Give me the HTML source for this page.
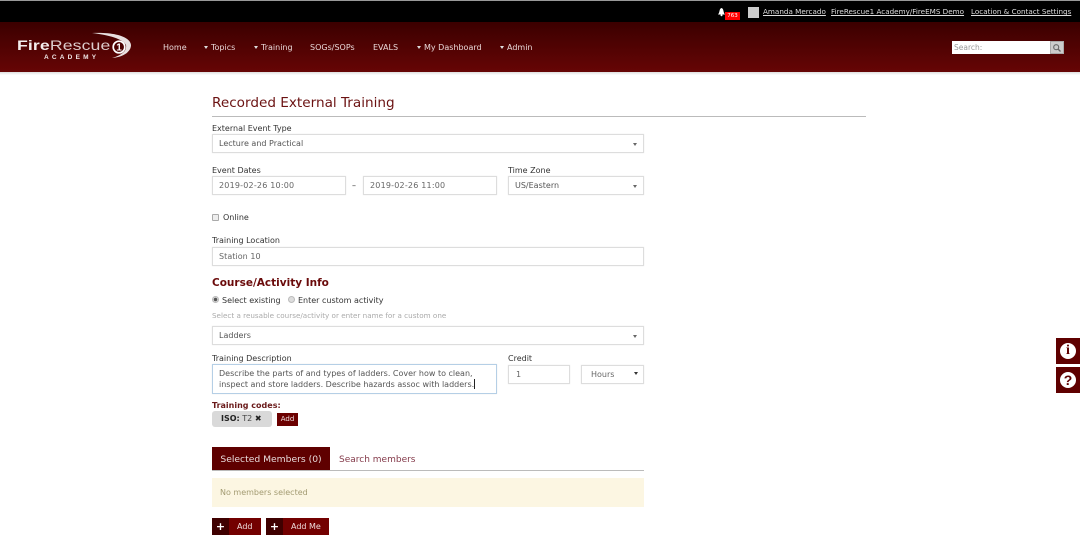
<!DOCTYPE html>
<html><head><meta charset="utf-8"><style>
html,body{margin:0;padding:0;background:#fff;width:1080px;height:541px;overflow:hidden}
body{position:relative;font-family:"DejaVu Sans",sans-serif;font-size:8px;color:#333}
.a{position:absolute;white-space:nowrap;line-height:12px}
.box{position:absolute;box-sizing:border-box;border:1px solid #ddd;background:#fff;color:#666;font-size:8px;padding-left:6px;white-space:nowrap;box-shadow:0 0 1px #e4e4e4}
.car{position:absolute;width:0;height:0;border:2.5px solid transparent;border-top:3px solid #666;border-bottom:0}
.nav{position:absolute;top:42px;color:#e8d8d8;font-size:8px;line-height:12px;white-space:nowrap}
.nc{display:inline-block;width:0;height:0;border:2.5px solid transparent;border-top:3px solid #ddd;border-bottom:0;margin-right:3px;vertical-align:1px}
.top{position:absolute;top:6px;color:#ddd;font-size:7.2px;line-height:12px;text-decoration:underline;white-space:nowrap}
</style></head><body>
<div style="position:absolute;left:0;top:0;width:1080px;height:1px;background:#999"></div>
<div style="position:absolute;left:0;top:1px;width:1080px;height:21px;background:#000"></div>
<div style="position:absolute;left:0;top:22px;width:1080px;height:50px;background:linear-gradient(#3b0000,#660505)"></div>
<div style="position:absolute;left:0;top:72px;width:1080px;height:3px;background:linear-gradient(#ddd,#fff)"></div>

<svg style="position:absolute;left:716px;top:6px" width="12" height="12" viewBox="0 0 12 12"><path d="M2 8.5 C4 6.5 3 2.5 5.5 2 C8 2.5 7 6.5 9 8.5 Z" fill="#fff"/><circle cx="5.5" cy="9.2" r="1" fill="#fff"/></svg>
<div class="a" style="left:725px;top:12px;width:15px;height:8px;background:#f00;color:#fff;font-size:5.5px;line-height:8px;text-align:center">763</div>
<div style="position:absolute;left:748px;top:7px;width:11px;height:11px;background:#ccc"></div>
<div class="top" style="left:763px">Amanda Mercado</div>
<div class="top" style="left:831px">FireRescue1 Academy/FireEMS Demo</div>
<div class="top" style="left:971px">Location &amp; Contact Settings</div>

<div class="a" style="left:17px;top:37px;font-family:'Liberation Sans',sans-serif;font-size:14px;line-height:16px;color:#f4eeee;transform-origin:0 50%;transform:scaleX(1.26);letter-spacing:.1px"><b>Fire</b><span style="font-weight:400;color:#dccccc">Rescue</span></div>
<svg style="position:absolute;left:85px;top:30px" width="50" height="32" viewBox="0 0 50 32"><path d="M7 3 C28 2 45 6 46 15 C46 22 38 27 27 28 C37 25 42 21 41 15 C38 9 24 5 7 3Z" fill="#e8e0e0"/><circle cx="34" cy="17" r="5.8" fill="#4a0000" stroke="#fff" stroke-width="1.7"/><text x="34" y="20.5" text-anchor="middle" font-family="Liberation Sans" font-weight="700" font-size="10" fill="#fff">1</text></svg>
<div class="a" style="left:44px;top:53px;font-family:'Liberation Sans',sans-serif;font-size:6.5px;line-height:9px;font-weight:700;color:#f0e6e6;letter-spacing:3.2px">ACADEMY</div>

<div class="nav" style="left:163px">Home</div>
<div class="nav" style="left:204px"><span class="nc"></span>Topics</div>
<div class="nav" style="left:254px"><span class="nc"></span>Training</div>
<div class="nav" style="left:310px">SOGs/SOPs</div>
<div class="nav" style="left:373px">EVALS</div>
<div class="nav" style="left:417px"><span class="nc"></span>My Dashboard</div>
<div class="nav" style="left:500px"><span class="nc"></span>Admin</div>

<div class="a" style="left:952px;top:41px;width:99px;height:13px;background:#fff;color:#999;font-size:7.5px;line-height:13px;padding-left:2px;box-sizing:border-box">Search:</div>
<div style="position:absolute;left:1050px;top:41px;width:14px;height:13px;background:#ccc;border:1px solid #aaa;box-sizing:border-box"></div>
<svg style="position:absolute;left:1052px;top:43px" width="10" height="10" viewBox="0 0 10 10"><circle cx="4.2" cy="4.2" r="2.5" fill="none" stroke="#666" stroke-width="1.1"/><path d="M6 6 L8.5 8.5" stroke="#666" stroke-width="1.3"/></svg>

<div class="a" style="left:212px;top:95px;font-size:13.6px;line-height:17px;color:#6b1212">Recorded External Training</div>
<div style="position:absolute;left:212px;top:116px;width:654px;height:1px;background:#bbb"></div>

<div class="a" style="left:212px;top:123px">External Event Type</div>
<div class="box" style="left:212px;top:134px;width:432px;height:19px;line-height:18px;color:#555">Lecture and Practical</div><div class="car" style="left:633px;top:143px"></div>

<div class="a" style="left:212px;top:165px">Event Dates</div>
<div class="box" style="left:212px;top:176px;width:134px;height:19px;line-height:18px;letter-spacing:.2px">2019-02-26 10:00</div>
<div class="a" style="left:352px;top:180px;color:#333">–</div>
<div class="box" style="left:363px;top:176px;width:134px;height:19px;line-height:18px;letter-spacing:.2px">2019-02-26 11:00</div>
<div class="a" style="left:508px;top:165px">Time Zone</div>
<div class="box" style="left:508px;top:176px;width:136px;height:19px;line-height:18px;color:#555">US/Eastern</div><div class="car" style="left:633px;top:185px"></div>

<div style="position:absolute;left:212px;top:214px;width:7px;height:7px;box-sizing:border-box;border:1px solid #aaa;border-radius:1px;background:#eee"></div>
<div class="a" style="left:223px;top:212px">Online</div>

<div class="a" style="left:212px;top:235px">Training Location</div>
<div class="box" style="left:212px;top:247px;width:432px;height:19px;line-height:17px;letter-spacing:.05px">Station 10</div>

<div class="a" style="left:212px;top:277px;font-size:10.5px;line-height:13px;font-weight:700;color:#6a0a0a">Course/Activity Info</div>

<div style="position:absolute;left:212px;top:296px;width:7px;height:7px;box-sizing:border-box;border-radius:50%;background:radial-gradient(#555 0 1.5px,#ddd 2px);border:.5px solid #bbb"></div>
<div class="a" style="left:222px;top:295px">Select existing</div>
<div style="position:absolute;left:288px;top:296px;width:7px;height:7px;box-sizing:border-box;border-radius:50%;background:#ddd;border:.5px solid #bbb"></div>
<div class="a" style="left:298px;top:295px">Enter custom activity</div>
<div class="a" style="left:212px;top:310px;font-size:7.2px;color:#aaa">Select a reusable course/activity or enter name for a custom one</div>

<div class="box" style="left:212px;top:326px;width:432px;height:19px;line-height:17px;color:#555">Ladders</div><div class="car" style="left:633px;top:335px"></div>

<div class="a" style="left:212px;top:353px">Training Description</div>
<div class="box" style="left:212px;top:364px;width:285px;height:30px;border-color:#b5cfe6;line-height:11px;padding-top:2.5px;color:#555">Describe the parts of and types of ladders. Cover how to clean,<br>inspect and store ladders. Describe hazards assoc with ladders.<span style="display:inline-block;width:1px;height:10px;background:#222;vertical-align:-2px"></span></div>
<div class="a" style="left:508px;top:353px">Credit</div>
<div class="box" style="left:508px;top:365px;width:62px;height:19px;line-height:17px;padding-left:7px">1</div>
<div class="box" style="left:581px;top:365px;width:63px;height:19px;line-height:18px;padding-left:9px">Hours</div><div class="car" style="left:634px;top:372px;border-top-color:#333"></div>

<div class="a" style="left:212px;top:400px;font-weight:700;color:#6a1a1a">Training codes:</div>
<div class="a" style="left:212px;top:411px;width:60px;height:16px;background:#d9d9d9;border-radius:3px;line-height:16px;text-indent:9px;color:#444"><b style="color:#222">ISO:</b> T2 <b style="color:#222">✖</b></div>
<div class="a" style="left:277px;top:413px;width:21px;height:13px;background:#6b0000;color:#eedede;font-size:7px;line-height:13px;text-align:center;box-sizing:border-box">Add</div>

<div class="a" style="left:212px;top:447px;width:118px;height:23px;background:#5f0000;color:#e8dcdc;font-size:9.2px;line-height:25px;text-align:center">Selected Members (0)</div>
<div class="a" style="left:339px;top:454px;font-size:9px;line-height:12px;color:#843a4a">Search members</div>
<div style="position:absolute;left:212px;top:470px;width:432px;height:1px;background:#bbb"></div>

<div class="a" style="left:212px;top:478px;width:432px;height:29px;background:#fcf6e2;color:#a39b72;line-height:30px;text-indent:8px">No members selected</div>

<div style="position:absolute;left:212px;top:518px;width:49px;height:17px;background:#730000"></div>
<div style="position:absolute;left:212px;top:518px;width:17px;height:17px;background:#3f0000"></div>
<div class="a" style="left:212px;top:519px;width:17px;line-height:16px;text-align:center;color:#fff;font-size:11px;font-weight:700">+</div>
<div class="a" style="left:237px;top:521px;color:#eedcdc">Add</div>
<div style="position:absolute;left:266px;top:518px;width:63px;height:17px;background:#730000"></div>
<div style="position:absolute;left:266px;top:518px;width:17px;height:17px;background:#3f0000"></div>
<div class="a" style="left:266px;top:519px;width:17px;line-height:16px;text-align:center;color:#fff;font-size:11px;font-weight:700">+</div>
<div class="a" style="left:291px;top:521px;color:#eedcdc">Add Me</div>

<div style="position:absolute;left:1056px;top:338px;width:24px;height:26px;background:#5f0000"></div>
<div style="position:absolute;left:1056px;top:367px;width:24px;height:26px;background:#5f0000"></div>
<div class="a" style="left:1060px;top:343px;width:16px;height:16px;background:#fff;border-radius:50%;color:#5f0000;font-size:14px;font-weight:700;line-height:16px;text-align:center;font-family:'Liberation Serif',serif">i</div>
<div class="a" style="left:1060px;top:372px;width:16px;height:16px;background:#fff;border-radius:50%;color:#5f0000;font-size:14px;font-weight:700;line-height:16px;text-align:center;font-family:'Liberation Sans',sans-serif">?</div>
</body></html>
